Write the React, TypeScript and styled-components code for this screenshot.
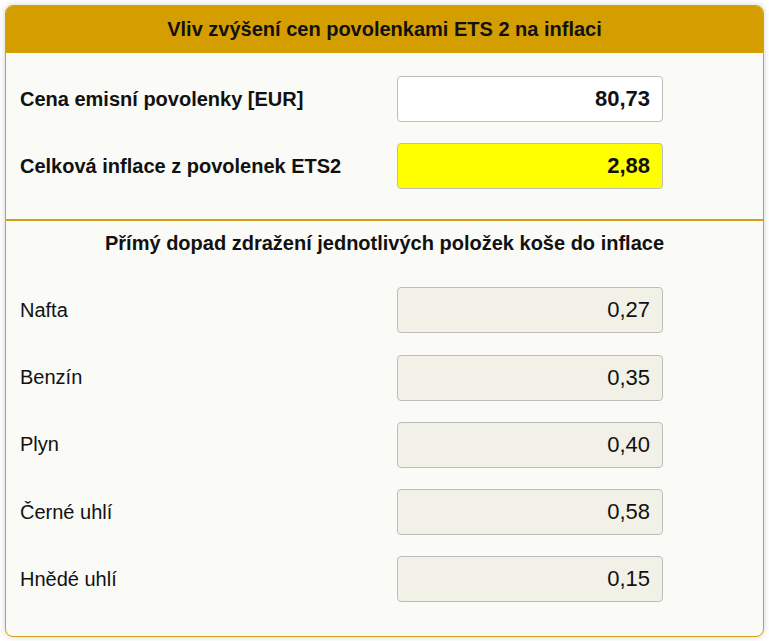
import React from 'react';
import styled, { createGlobalStyle } from 'styled-components';

const GlobalStyle = createGlobalStyle`
    body {
        margin: 0;
        background: #ffffff;
        font-family: "Liberation Sans", Arial, sans-serif;
        color: #111;
    }
`;

const Card = styled.div`
    margin: 5px;
    width: 757px;
    border: 1px solid #d4a017;
    border-radius: 8px;
    background: #fafaf6;
    box-shadow: 0 0 6px rgba(0, 0, 0, 0.18);
    overflow: hidden;
`;

const Header = styled.div`
    height: 47px;
    background: #d49e00;
    display: flex;
    align-items: center;
    justify-content: center;
    font-size: 20px;
    font-weight: bold;
    color: #111;
`;

const Section = styled.div<{ $top: number; $bottom: number }>`
    padding: ${(p) => p.$top}px 14px ${(p) => p.$bottom}px 14px;
    & + & {
        border-top: 2px solid #d4a017;
    }
`;

const SubTitle = styled.div`
    text-align: center;
    font-size: 20px;
    font-weight: bold;
    margin-bottom: 32px;
`;

const Rows = styled.div`
    display: grid;
    grid-template-columns: 377px 266px;
    row-gap: 21.25px;
    align-items: center;
`;

const Label = styled.div<{ $bold?: boolean }>`
    font-size: 20px;
    font-weight: ${(p) => (p.$bold ? 'bold' : 'normal')};
`;

const Value = styled.div<{ $bg: string; $bold?: boolean }>`
    box-sizing: border-box;
    height: 46px;
    border: 1px solid #bdbdbd;
    border-radius: 4px;
    background: ${(p) => p.$bg};
    display: flex;
    align-items: center;
    justify-content: flex-end;
    padding-right: 12px;
    font-size: 22px;
    font-weight: ${(p) => (p.$bold ? 'bold' : 'normal')};
`;

const items = [
    { name: 'Nafta', value: '0,27' },
    { name: 'Benzín', value: '0,35' },
    { name: 'Plyn', value: '0,40' },
    { name: 'Černé uhlí', value: '0,58' },
    { name: 'Hnědé uhlí', value: '0,15' },
];

export default function App() {
    return (
        <>
            <GlobalStyle />
            <Card>
                <Header>Vliv zvýšení cen povolenkami ETS 2 na inflaci</Header>
                <Section $top={23} $bottom={30}>
                    <Rows>
                        <Label $bold>Cena emisní povolenky [EUR]</Label>
                        <Value $bg="#ffffff" $bold>80,73</Value>
                        <Label $bold>Celková inflace z povolenek ETS2</Label>
                        <Value $bg="#ffff00" $bold>2,88</Value>
                    </Rows>
                </Section>
                <Section $top={11} $bottom={34}>
                    <SubTitle>Přímý dopad zdražení jednotlivých položek koše do inflace</SubTitle>
                    <Rows>
                        {items.map((it) => (
                            <React.Fragment key={it.name}>
                                <Label>{it.name}</Label>
                                <Value $bg="#f1f1e7">{it.value}</Value>
                            </React.Fragment>
                        ))}
                    </Rows>
                </Section>
            </Card>
        </>
    );
}
